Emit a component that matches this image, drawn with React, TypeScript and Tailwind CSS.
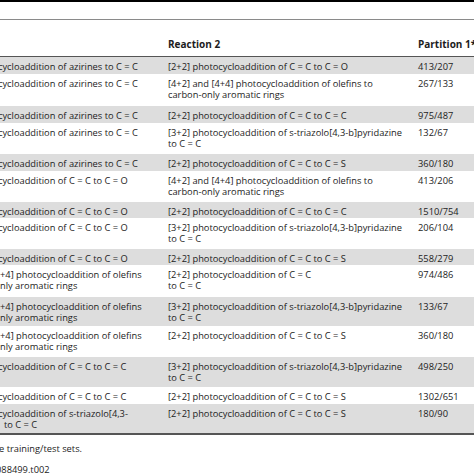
import React from "react";

type Line = { t: string; ml: number };
type Row = { h: number; c1: Line[]; c2: string[]; c3: string; gray: boolean };

const AZ: Line[] = [{ t: "cycloaddition of azirines to C = C", ml: -2 }];
const CO: Line[] = [{ t: "cycloaddition of C = C to C = O", ml: -2 }];
const CC: Line[] = [{ t: "cycloaddition of C = C to C = C", ml: -2 }];
const OL: Line[] = [
  { t: "+4] photocycloaddition of olefins", ml: 0 },
  { t: "nly aromatic rings", ml: 0 },
];
const TRI = ["[3+2] photocycloaddition of s-triazolo[4,3-b]pyridazine", "to C = C"];
const OLF = ["[4+2] and [4+4] photocycloaddition of olefins to", "carbon-only aromatic rings"];

const rows: Row[] = [
  { h: 17, c1: AZ, c2: ["[2+2] photocycloaddition of C = C to C = O"], c3: "413/207", gray: true },
  { h: 32, c1: AZ, c2: OLF, c3: "267/133", gray: false },
  { h: 17, c1: AZ, c2: ["[2+2] photocycloaddition of C = C to C = C"], c3: "975/487", gray: true },
  { h: 31, c1: AZ, c2: TRI, c3: "132/67", gray: false },
  { h: 17, c1: AZ, c2: ["[2+2] photocycloaddition of C = C to C = S"], c3: "360/180", gray: true },
  { h: 31, c1: CO, c2: OLF, c3: "413/206", gray: false },
  { h: 16, c1: CO, c2: ["[2+2] photocycloaddition of C = C to C = C"], c3: "1510/754", gray: true },
  { h: 31, c1: CO, c2: TRI, c3: "206/104", gray: false },
  { h: 16, c1: CO, c2: ["[2+2] photocycloaddition of C = C to C = S"], c3: "558/279", gray: true },
  { h: 32, c1: OL, c2: ["[2+2] photocycloaddition of C = C", "to C = C"], c3: "974/486", gray: false },
  { h: 29, c1: OL, c2: TRI, c3: "133/67", gray: true },
  { h: 31, c1: OL, c2: ["[2+2] photocycloaddition of C = C to C = S"], c3: "360/180", gray: false },
  { h: 30, c1: CC, c2: TRI, c3: "498/250", gray: true },
  { h: 17, c1: CC, c2: ["[2+2] photocycloaddition of C = C to C = S"], c3: "1302/651", gray: false },
  {
    h: 29,
    c1: [
      { t: "cycloaddition of s-triazolo[4,3-", ml: -2 },
      { t: "to C = C", ml: 4 },
    ],
    c2: ["[2+2] photocycloaddition of C = C to C = S"],
    c3: "180/90",
    gray: true,
  },
];

export default function App() {
  return (
    <div
      className="w-[474px] h-[474px] overflow-hidden bg-white text-[#1c1c1c]"
      style={{ fontFamily: '"Open Sans", "Liberation Sans", sans-serif' }}
    >
      <div className="h-[2px] bg-black" />
      <div className="h-[17px]" />
      <div className="h-px bg-[#8a8a8a]" />
      <div className="h-[36px] grid grid-cols-[168px_250px_1fr] items-end pb-[6px] text-[10px] leading-[12px] font-bold">
        <div />
        <div>Reaction 2</div>
        <div className="whitespace-nowrap">Partition 1*</div>
      </div>
      <div className="h-px bg-[#555]" />
      {rows.map((r, i) => (
        <div
          key={i}
          className={`grid grid-cols-[168px_250px_1fr] pt-[3.5px] text-[9.3px] leading-[11px] overflow-hidden ${
            r.gray ? "bg-[#dddddd]" : "bg-white"
          }`}
          style={{ height: r.h }}
        >
          <div className="whitespace-nowrap overflow-hidden">
            {r.c1.map((l, j) => (
              <div key={j} style={{ marginLeft: l.ml }}>
                {l.t}
              </div>
            ))}
          </div>
          <div className="whitespace-nowrap">
            {r.c2.map((t, j) => (
              <div key={j}>{t}</div>
            ))}
          </div>
          <div className="whitespace-nowrap">{r.c3}</div>
        </div>
      ))}
      <div className="h-[1.5px] bg-[#555]" />
      <div className="pt-[8px] text-[9.3px] leading-[11px] whitespace-nowrap">
        <div className="-ml-[1px]">e training/test sets.</div>
        <div className="mt-[10px] -ml-[4px]">088499.t002</div>
      </div>
    </div>
  );
}
